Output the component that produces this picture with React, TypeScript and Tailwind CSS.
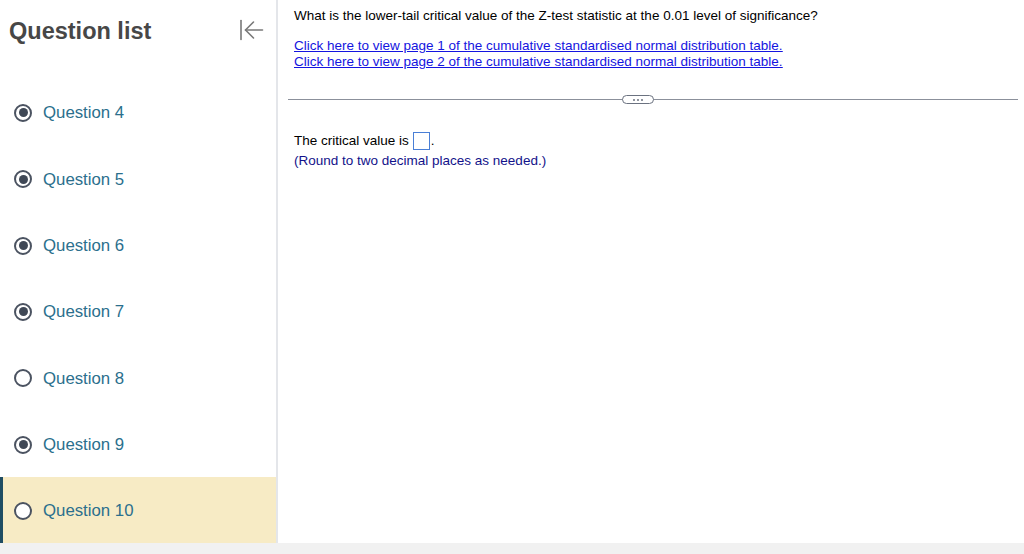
import React from 'react';

const questions = [
  { n: 4, done: true },
  { n: 5, done: true },
  { n: 6, done: true },
  { n: 7, done: true },
  { n: 8, done: false },
  { n: 9, done: true },
  { n: 10, done: false, current: true },
];

function Radio({ done }: { done: boolean }) {
  return (
    <span className="w-[18px] h-[18px] rounded-full border-[2.5px] border-[#4b5361] flex items-center justify-center shrink-0 bg-white">
      {done && <span className="w-[9px] h-[9px] rounded-full bg-[#3f4856]" />}
    </span>
  );
}

function CollapseIcon() {
  return (
    <svg width="26" height="22" viewBox="0 0 26 22" fill="none" stroke="#787878" strokeWidth={1.6} strokeLinecap="round" strokeLinejoin="round">
      <path d="M3 1.5v19" />
      <path d="M7.5 11h17" />
      <path d="M15.5 3l-8 8 8 8" />
    </svg>
  );
}

export default function App() {
  return (
    <div className="w-[1024px] h-[554px] flex flex-col bg-white overflow-hidden" style={{ fontFamily: '"Liberation Sans", Arial, sans-serif' }}>
      <div className="flex flex-1 min-h-0">
        {/* Sidebar */}
        <aside className="w-[278px] shrink-0 border-r-2 border-[#e4e6ea] flex flex-col">
          <div className="h-[79px] flex items-start justify-between pl-[9px] pr-[12px] pt-[17px]">
            <h1 className="text-[23.5px] leading-[28px] font-bold text-[#474747]">Question list</h1>
            <span className="mt-[2px]"><CollapseIcon /></span>
          </div>
          <ul className="flex flex-col">
            {questions.map((q) => (
              <li
                key={q.n}
                className={`h-[66.33px] flex items-center gap-[11px] pt-[2px] ${
                  q.current ? 'bg-[#f7ebc5] border-l-[3px] border-[#1f4d63] pl-[11px]' : 'pl-[14px]'
                }`}
              >
                <Radio done={q.done} />
                <span className="text-[16.8px] text-[#2b6f8d]">Question {q.n}</span>
              </li>
            ))}
          </ul>
        </aside>

        {/* Main */}
        <main className="flex-1 pt-[8px]">
          <p className="pl-[16px] text-[13.5px] leading-[16px] text-black">
            What is the lower-tail critical value of the Z-test statistic at the 0.01 level of significance?
          </p>
          <div className="pl-[16px] mt-[14px] flex flex-col items-start text-[13.5px] leading-[16px] text-[#1414e0] underline">
            <a href="#">Click here to view page 1 of the cumulative standardised normal distribution table.</a>
            <a href="#">Click here to view page 2 of the cumulative standardised normal distribution table.</a>
          </div>

          <div className="relative mt-[29px] ml-[10px] mr-[6px] h-px bg-[#8b909b]">
            <span className="absolute left-[334px] top-[-4px] w-[32px] h-[9px] rounded-full border border-[#6b7280] bg-white flex items-center justify-center gap-[2px]">
              <span className="w-[2px] h-[2px] rounded-full bg-[#6b7280]" />
              <span className="w-[2px] h-[2px] rounded-full bg-[#6b7280]" />
              <span className="w-[2px] h-[2px] rounded-full bg-[#6b7280]" />
            </span>
          </div>

          <div className="pl-[16px] mt-[32px] text-[13.5px] leading-[16px]">
            <div className="flex items-center h-[18px] text-black">
              <span>The critical value is</span>
              <span className="ml-[4px] w-[17px] h-[18px] border border-[#4a7fd6] bg-white" />
              <span className="ml-[1px]">.</span>
            </div>
            <p className="mt-[3px] text-[#12128a]">(Round to two decimal places as needed.)</p>
          </div>
        </main>
      </div>
      <div className="h-[11px] bg-[#f1f1f1] shrink-0" />
    </div>
  );
}
